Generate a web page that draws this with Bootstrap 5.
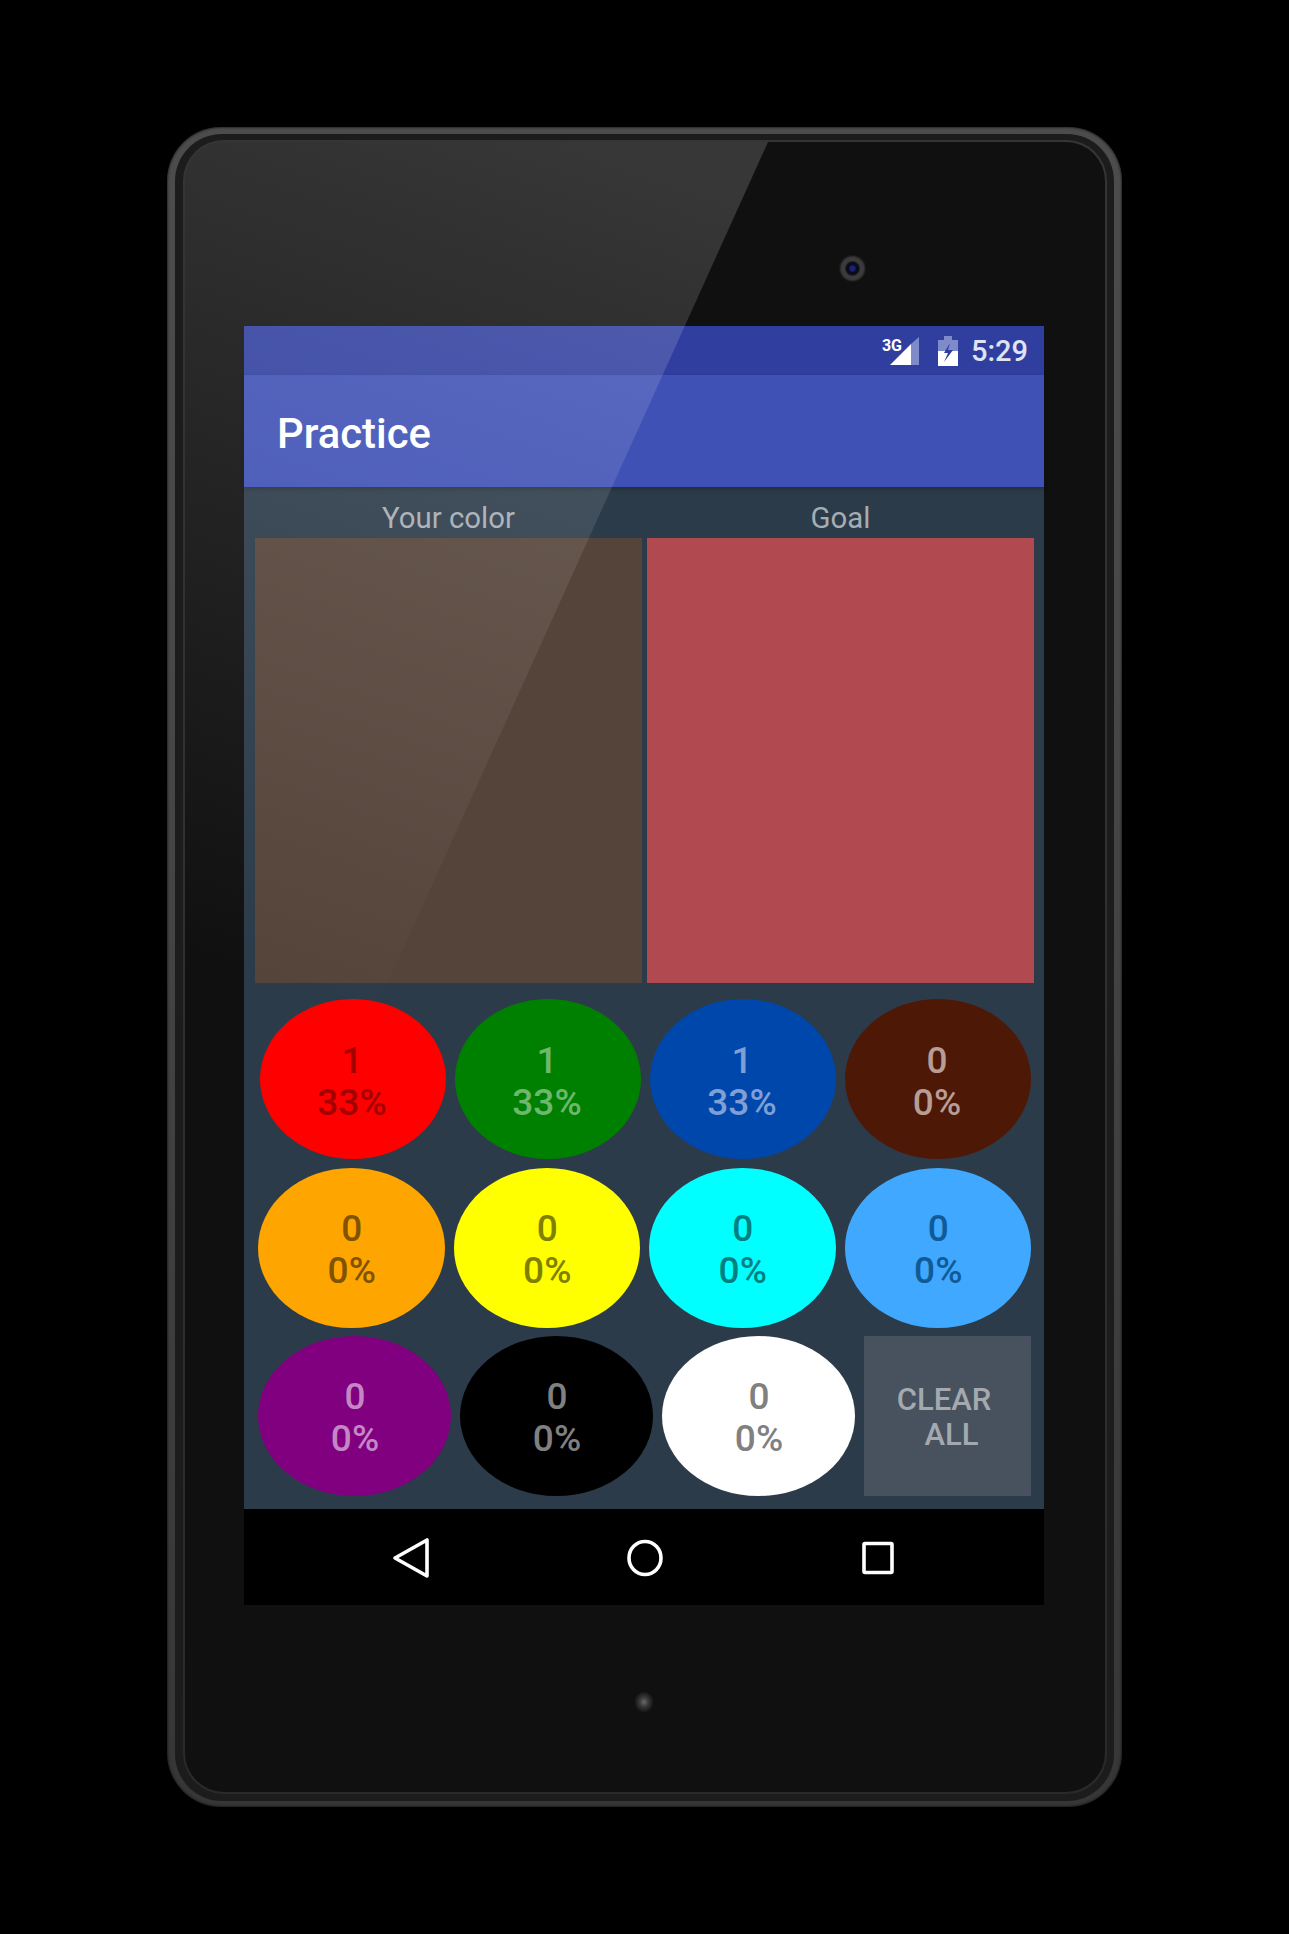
<!DOCTYPE html>
<html lang="en">
<head>
<meta charset="utf-8">
<title>Practice</title>
<link href="https://cdn.jsdelivr.net/npm/bootstrap@5.3.0/dist/css/bootstrap.min.css" rel="stylesheet">
<style>
html, body { height: 1934px; background: #000; margin: 0; overflow: hidden; }
body { font-family: Roboto, "Liberation Sans", sans-serif; }
.shell-outer { margin: 127px 0 0 167px; width: 955px; height: 1680px; padding: 7px 8px 6px 8px; border-radius: 54px; background: linear-gradient(180deg, #4c4c4c 0%, #484848 30%, #363636 100%); box-shadow: inset 0 0 2px 1px rgba(0,0,0,.45); }
.shell-mid { height: 100%; padding: 6px 7px 7px 8px; border-radius: 47px; background: #1c1c1c; }
.shell-inner { height: 100%; padding: 2px; border-radius: 41px; background: linear-gradient(180deg, #353535, #2a2a2a); }
.bezel { height: 100%; border-radius: 39px; background: #101010; padding: 184px 60px 0 59px; }
.lens { position: absolute; left: 654px; top: 113px; width: 27px; height: 27px; background: radial-gradient(circle, #18237f 0 2px, #0b0b1c 4px 6px, #3b3b3b 8px 11px, #1a1a1a 13px); }
.sensor { position: absolute; left: 449px; top: 1549px; width: 20px; height: 22px; background: radial-gradient(ellipse, #6a6a6a 0, #3a3a3a 30%, rgba(20,20,20,0) 70%); }
.glare { position: absolute; left: 0; top: 0; pointer-events: none; }
.screen-box { width: 800px; height: 1279px; }
.status-strip { height: 49px; background: #303f9f; color: #dfe3f3; padding-right: 16px; padding-top: 1px; }
.status-time { font-size: 29px; font-weight: 500; line-height: 1; margin-left: 13px; }
.three-g { font-size: 16px; font-weight: 700; line-height: 1; color: #fff; position: absolute; left: -1px; top: 1px; }
.signal-wrap { width: 36px; height: 29px; }
.signal-wrap svg { position: absolute; right: 0; top: 0; }
.battery-icon { margin-left: 19px; }
.app-strip { height: 112px; background: #3f51b5; color: #fff; padding-left: 33px; padding-top: 6px; font-size: 41.8px; font-weight: 500; line-height: 1; box-shadow: 0 2px 4px rgba(0,0,0,.25); position: relative; }
.work-area { height: 1022px; background: #2c3b49; }
.label-col { width: 387px; height: 51px; color: #a5adb4; font-size: 29.4px; line-height: 1; padding-bottom: 5px; }
.swatch-row { padding-left: 11px; gap: 5px; }
.swatch-you { width: 387px; height: 445px; background: #55443a; }
.swatch-goal { width: 387px; height: 445px; background: #b04a50; }
.orb-row { height: 160px; gap: 9px; }
.row-one { margin-top: 16px; padding-left: 16px; }
.row-two { margin-top: 9px; padding-left: 14px; }
.row-three { margin-top: 8px; padding-left: 14px; }
.orb { width: 186px; height: 160px; padding: 6px 2px 0 0; border: 0; font-size: 37px; font-weight: 500; line-height: 42px; }
.row-two .orb { width: 186.5px; padding: 4px 0 0 1px; }
.row-three .orb { width: 193px; padding: 4px 0 0 1px; }
.orb span { display: block; }
.o-red { background: #f00; color: #a30000; }
.o-green { background: #008000; color: #6db86d; }
.o-blue { background: #0047ab; color: #7f9fd6; }
.o-brown { background: #4e1807; color: #b89d95; }
.o-orange { background: #ffa500; color: #7f5300; }
.o-yellow { background: #ff0; color: #808000; }
.o-cyan { background: #0ff; color: #008080; }
.o-sky { background: #40a8ff; color: #105a96; }
.o-purple { background: #800080; color: #c487c4; }
.o-black { background: #000; color: #808080; }
.o-white { background: #fff; color: #808080; }
.clear-box { width: 167px; height: 160px; background: #47525e; color: #a3a9af; font-size: 31px; font-weight: 500; line-height: 35px; padding-top: 1px; }
.clear-a { margin-right: 7px; }
.clear-b { margin-left: 8px; }
.nav-strip { height: 96px; background: #000; }
.nav-icon { position: absolute; top: 0; left: 0; }
</style>
</head>
<body>
<div class="shell-outer">
  <div class="shell-mid">
    <div class="shell-inner">
      <div class="bezel position-relative overflow-hidden">
        <div class="lens rounded-circle"></div>
        <div class="screen-box d-flex flex-column">
          <div class="status-strip d-flex align-items-center justify-content-end">
            <div class="signal-wrap position-relative">
              <span class="three-g">3G</span>
              <svg width="29" height="29" viewBox="0 0 29 29"><polygon points="29,0 29,28 21,28 21,7" fill="#7f8bc8"/><polygon points="21,7 21,28 0,28" fill="#fff"/></svg>
            </div>
            <svg class="battery-icon" width="20" height="30" viewBox="0 0 20 30">
              <path d="M0 4h6V0h8v4h6v26H0z" fill="#7f8bc8"/>
              <path d="M0 15h20v15H0z" fill="#fff"/>
              <path d="M12 7 6 17h4l-4 9 9-12h-5l2-7z" fill="#303f9f"/>
            </svg>
            <span class="status-time">5:29</span>
          </div>
          <div class="app-strip d-flex align-items-center">Practice</div>
          <div class="work-area">
            <div class="swatch-row d-flex">
              <div class="label-col d-flex align-items-end justify-content-center">Your color</div>
              <div class="label-col d-flex align-items-end justify-content-center">Goal</div>
            </div>
            <div class="swatch-row d-flex">
              <div class="swatch-you"></div>
              <div class="swatch-goal"></div>
            </div>
            <div class="orb-row row-one d-flex">
              <button class="btn orb rounded-circle o-red"><span>1</span><span>33%</span></button>
              <button class="btn orb rounded-circle o-green"><span>1</span><span>33%</span></button>
              <button class="btn orb rounded-circle o-blue"><span>1</span><span>33%</span></button>
              <button class="btn orb rounded-circle o-brown"><span>0</span><span>0%</span></button>
            </div>
            <div class="orb-row row-two d-flex">
              <button class="btn orb rounded-circle o-orange"><span>0</span><span>0%</span></button>
              <button class="btn orb rounded-circle o-yellow"><span>0</span><span>0%</span></button>
              <button class="btn orb rounded-circle o-cyan"><span>0</span><span>0%</span></button>
              <button class="btn orb rounded-circle o-sky"><span>0</span><span>0%</span></button>
            </div>
            <div class="orb-row row-three d-flex">
              <button class="btn orb rounded-circle o-purple"><span>0</span><span>0%</span></button>
              <button class="btn orb rounded-circle o-black"><span>0</span><span>0%</span></button>
              <button class="btn orb rounded-circle o-white"><span>0</span><span>0%</span></button>
              <div class="clear-box d-flex flex-column align-items-center justify-content-center text-center"><span class="clear-a">CLEAR</span><span class="clear-b">ALL</span></div>
            </div>
          </div>
          <div class="nav-strip position-relative">
            <svg class="nav-icon" width="800" height="96" viewBox="0 0 800 96" fill="none" stroke="#fff" stroke-width="3.6" stroke-linejoin="round">
              <polygon points="183,31 183,67 151,49"/>
              <ellipse cx="401" cy="49" rx="16" ry="16.5"/>
              <rect x="620" y="34.500" width="28" height="29" rx="1"/>
            </svg>
          </div>
        </div>
        <div class="sensor"></div>
        <svg class="glare" width="915" height="1650" viewBox="0 0 915 1650">
          <defs>
            <linearGradient id="sheen" gradientUnits="userSpaceOnUse" x1="430" y1="0" x2="130" y2="860">
              <stop offset="0" stop-color="#fff" stop-opacity=".165"/>
              <stop offset="1" stop-color="#fff" stop-opacity="0"/>
            </linearGradient>
          </defs>
          <polygon points="0,0 583,0 195,858 0,858" fill="url(#sheen)"/>
        </svg>
      </div>
    </div>
  </div>
</div>
<script src="https://cdn.jsdelivr.net/npm/bootstrap@5.3.0/dist/js/bootstrap.bundle.min.js"></script>
</body>
</html>
